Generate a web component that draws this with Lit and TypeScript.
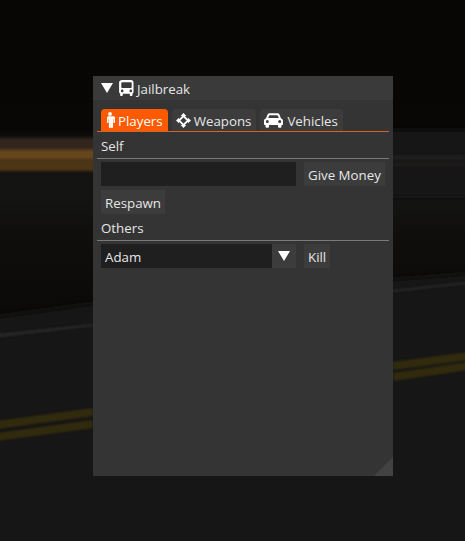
import { LitElement, html, css, svg } from "lit";
import { customElement } from "lit/decorators.js";

const busIcon = html`<svg class="icon" style="width:15px;height:16px" viewBox="0 0 15 16"><path fill="currentColor" fill-rule="evenodd" d="M3 0h9c1.500 0 2.500 1 2.500 2.500V12c0 .8-.4 1.300-1 1.500v1.500c0 .6-.3 1-.9 1h-.9c-.6 0-.9-.4-.9-1V13.800H3.800V15c0 .6-.3 1-.9 1H2c-.6 0-.9-.4-.9-1V13.500c-.6-.2-1-.7-1-1.500V2.500C.1 1 1.500 0 3 0ZM3.300 2.200c-.6 0-1 .3-1 .8v4c0 .6.400 1 1 1h8.400c.6 0 1-.4 1-1V3c0-.5-.4-.8-1-.8ZM3.200 9.600a1.300 1.300 0 1 0 0 2.600a1.300 1.300 0 0 0 0-2.600ZM11.800 9.600a1.300 1.300 0 1 0 0 2.600a1.300 1.300 0 0 0 0-2.600Z"/></svg>`;
const maleIcon = html`<svg class="icon" style="width:10px;height:16px" viewBox="0 0 10 16"><circle cx="5" cy="1.900" r="1.900" fill="currentColor"/><path fill="currentColor" d="M1.600 4.300h6.800c.9 0 1.600.7 1.600 1.600v4.300c0 .5-.3.9-.8.900s-.8-.4-.8-.9V7h-.4v8c0 .6-.4 1-1 1s-1-.4-1-1v-4.500h-.1V15c0 .6-.4 1-1 1s-1-.4-1-1V7h-.4v3.200c0 .5-.3.900-.8.900s-.7-.4-.7-.9V5.900c0-.9.700-1.600 1.600-1.600Z"/></svg>`;
const moveIcon = html`<svg class="icon" style="width:15px;height:15px" viewBox="0 0 15 15"><path fill="none" stroke="currentColor" stroke-width="1.800" d="M7.500 3 12 7.500 7.500 12 3 7.500Z"/><path fill="currentColor" d="M7.500 0 10.300 3H4.700ZM7.500 15 4.700 12H10.300ZM0 7.500 3 4.700V10.300ZM15 7.500 12 10.300V4.700Z"/></svg>`;
const carIcon = html`<svg class="icon" style="width:20px;height:15px" viewBox="0 0 20 15"><path fill="currentColor" fill-rule="evenodd" d="M5.500 .2h8c1 0 1.800.6 2.100 1.500l1.300 3.500c1.200.4 2.100 1.500 2.100 2.800v3.200c0 .5-.3.800-.8.800h-.7v1.400c0 .8-.6 1.400-1.400 1.400h-.7c-.8 0-1.400-.6-1.400-1.400v-1.400H5v1.400c0 .8-.6 1.400-1.400 1.400h-.7c-.8 0-1.400-.6-1.400-1.400v-1.400H.8c-.5 0-.8-.3-.8-.8V8c0-1.300.9-2.400 2.100-2.800L3.400 1.700C3.700.8 4.500.2 5.500.2ZM6 2.200c-.5 0-.8.200-1 .7L4.200 5.100h10.600L14 2.900c-.2-.5-.5-.7-1-.7ZM3.300 6.900a1.500 1.500 0 1 0 0 3 1.500 1.500 0 0 0 0-3ZM15.700 6.900a1.500 1.500 0 1 0 0 3 1.500 1.500 0 0 0 0-3Z"/></svg>`;

const backdrop = svg`
  <defs>
    <linearGradient id="base" x1="0" y1="0" x2="0" y2="541" gradientUnits="userSpaceOnUse">
      <stop offset="0" stop-color="#070605"/>
      <stop offset=".24" stop-color="#080706"/>
      <stop offset=".26" stop-color="#121110"/>
      <stop offset=".36" stop-color="#141413"/>
      <stop offset=".44" stop-color="#0f0e0d"/>
      <stop offset=".52" stop-color="#0c0b09"/>
      <stop offset=".58" stop-color="#0b0a08"/>
      <stop offset="1" stop-color="#0b0a08"/>
    </linearGradient>
    <filter id="wide" x="-20%" y="-50%" width="140%" height="200%"><feGaussianBlur stdDeviation="4 3"/></filter>
    <filter id="soft" x="-10%" y="-50%" width="120%" height="200%"><feGaussianBlur stdDeviation="2 1.800"/></filter>
    <filter id="line" x="-10%" y="-200%" width="120%" height="500%"><feGaussianBlur stdDeviation="1.500 1.200"/></filter>
  </defs>
  <rect width="465" height="541" fill="url(#base)"/>
  <polygon points="-20,319 120,300 490,272 490,560 -20,560" fill="#151514" filter="url(#wide)"/>
  <rect x="385" y="130" width="100" height="66" fill="#161615" filter="url(#wide)"/>
  <g filter="url(#soft)">
    <rect x="-20" y="138" width="125" height="12" fill="#33271b"/>
    <rect x="-20" y="150" width="125" height="9" fill="#66441e"/>
    <rect x="-20" y="159" width="125" height="2" fill="#3e2d1b"/>
    <rect x="-20" y="161" width="125" height="10" fill="#4d3419"/>
    <rect x="393" y="155" width="72" height="5" fill="#1d1c1b"/>
    <rect x="393" y="163" width="72" height="3" fill="#201f1e"/>
  </g>
  <g filter="url(#line)">
    <polygon points="-10,335 93,324 93,326 -10,338" fill="#292929"/>
    <polygon points="393,290 475,281 475,283 393,292" fill="#292929"/>
    <polygon points="-10,422 93,408 93,416 -10,430" fill="#322b0f"/>
    <polygon points="-10,434 93,420 93,428 -10,442" fill="#322b0f"/>
    <polygon points="393,362 475,351 475,359 393,370" fill="#322b0f"/>
    <polygon points="393,373 475,361 475,369 393,381" fill="#322b0f"/>
  </g>
`;

@customElement("app-root")
export class AppRoot extends LitElement {
  static styles = css`
    :host { display: block; position: relative; width: 465px; height: 541px; overflow: hidden;
      font-family: "Open Sans", sans-serif; font-size: 13.3px; color: #e6e6e6; }
    .bg { position: absolute; inset: 0; width: 465px; height: 541px; display: block; }
    .stage { position: relative; height: 100%; box-sizing: border-box; padding: 76px 0 0 93px; }
    .window { position: relative; width: 300px; height: 400px; background: #343434;
      display: flex; flex-direction: column; }
    .title { height: 24px; background: #3a3a3a; display: flex; align-items: center; padding-left: 8px; flex: none; }
    .arrow { width: 0; height: 0; border-left: 6.500px solid transparent; border-right: 6.500px solid transparent;
      border-top: 10px solid #fff; flex: none; }
    .title .arrow { margin-right: 6px; }
    .title .label { margin-left: 3px; padding-top: 1px; }
    .icon { display: block; flex: none; color: #fff; }
    .content { padding: 9px 4px 0; display: flex; flex-direction: column; }
    .tabs { display: flex; gap: 4px; padding: 0 4px; height: 22px; }
    .tab { display: flex; align-items: center; gap: 3px; padding: 0 5px 0 4px; background: #3c3c3c; border-radius: 4px 4px 0 0; }
    .tab span { padding-top: 1px; }
    .tab.on { background: #ff5a00; color: #fff; }
    .rule { height: 1px; background: #7a7a7a; }
    .rule.hot { background: #d4622a; }
    .heading { height: 26px; box-sizing: border-box; padding: 1px 0 0 4px; display: flex; align-items: center; }
    .row { display: flex; gap: 8px; padding: 0 4px; margin-top: 4px; }
    .rule + .row { margin-top: 3px; }
    .field { width: 195px; height: 24px; background: #1f1f1f; flex: none; }
    .btn { height: 24px; box-sizing: border-box; display: flex; align-items: center; padding: 1px 4px 0; background: #3c3c3c; flex: none; }
    .combo { width: 195px; height: 24px; display: flex; background: #1f1f1f; flex: none; }
    .combo .value { flex: 1; display: flex; align-items: center; padding: 1px 0 0 4px; }
    .combo .drop { width: 24px; background: #3c3c3c; display: flex; align-items: center; justify-content: center; }
    .grip { position: absolute; right: 0; bottom: 0; width: 19px; height: 19px; background: #424242;
      clip-path: polygon(100% 0, 100% 100%, 0 100%); }
  `;

  render() {
    return html`
      <svg class="bg" viewBox="0 0 465 541">${backdrop}</svg>
      <div class="stage">
        <div class="window">
          <div class="title"><span class="arrow"></span>${busIcon}<span class="label">Jailbreak</span></div>
          <div class="content">
            <div class="tabs">
              <div class="tab on">${maleIcon}<span>Players</span></div>
              <div class="tab">${moveIcon}<span>Weapons</span></div>
              <div class="tab">${carIcon}<span>Vehicles</span></div>
            </div>
            <div class="rule hot"></div>
            <div class="heading">Self</div>
            <div class="rule"></div>
            <div class="row"><div class="field"></div><div class="btn">Give Money</div></div>
            <div class="row"><div class="btn">Respawn</div></div>
            <div class="heading">Others</div>
            <div class="rule"></div>
            <div class="row">
              <div class="combo"><div class="value">Adam</div><div class="drop"><span class="arrow"></span></div></div>
              <div class="btn">Kill</div>
            </div>
          </div>
          <div class="grip"></div>
        </div>
      </div>
    `;
  }
}
